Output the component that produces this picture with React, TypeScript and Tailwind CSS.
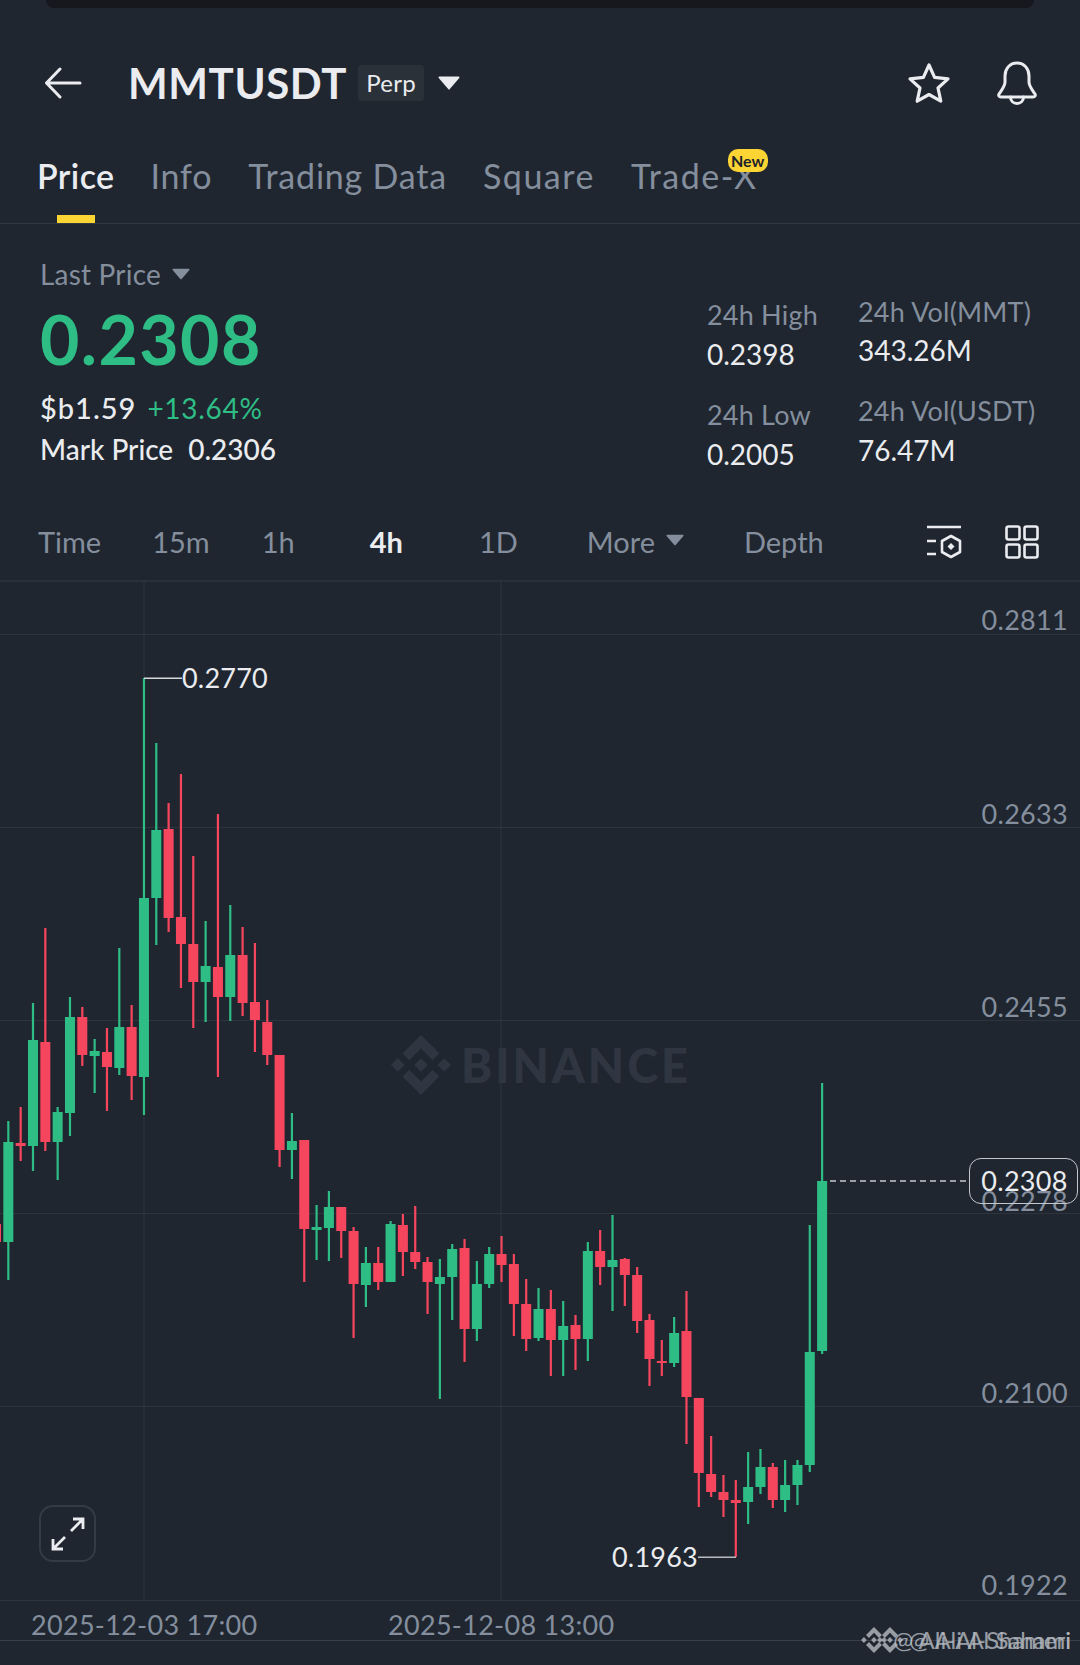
import { SiBinance } from "react-icons/si";

// [colour, wick top, body top, body bottom, wick bottom] in page y coordinates
type Candle = ["g" | "r", number, number, number, number];

const CANDLES: Candle[] = [
  ["r", 1224, 1224, 1242, 1242],
  ["g", 1121, 1142, 1242, 1280],
  ["r", 1107, 1143, 1146, 1161],
  ["g", 1003, 1040, 1146, 1171],
  ["r", 928, 1042, 1142, 1151],
  ["g", 1107, 1112, 1142, 1180],
  ["g", 997, 1017, 1113, 1136],
  ["r", 1007, 1017, 1055, 1066],
  ["g", 1039, 1051, 1056, 1093],
  ["r", 1028, 1052, 1067, 1111],
  ["g", 948, 1027, 1068, 1075],
  ["r", 1005, 1027, 1076, 1100],
  ["g", 678, 898, 1077, 1115],
  ["g", 743, 830, 898, 945],
  ["r", 803, 829, 918, 932],
  ["r", 774, 917, 944, 988],
  ["r", 856, 944, 982, 1028],
  ["g", 921, 966, 982, 1022],
  ["r", 814, 967, 997, 1077],
  ["g", 905, 955, 997, 1021],
  ["r", 927, 955, 1003, 1016],
  ["r", 943, 1002, 1020, 1052],
  ["r", 1000, 1022, 1055, 1065],
  ["r", 1055, 1055, 1150, 1167],
  ["g", 1113, 1141, 1150, 1179],
  ["r", 1140, 1140, 1229, 1282],
  ["g", 1205, 1227, 1230, 1260],
  ["g", 1191, 1207, 1228, 1261],
  ["r", 1207, 1207, 1231, 1258],
  ["r", 1227, 1231, 1284, 1338],
  ["g", 1247, 1263, 1285, 1307],
  ["r", 1247, 1263, 1282, 1290],
  ["g", 1221, 1224, 1282, 1282],
  ["r", 1214, 1225, 1252, 1276],
  ["r", 1206, 1252, 1262, 1269],
  ["r", 1257, 1262, 1282, 1314],
  ["g", 1259, 1277, 1284, 1399],
  ["g", 1244, 1249, 1277, 1320],
  ["r", 1239, 1248, 1329, 1362],
  ["g", 1261, 1284, 1329, 1341],
  ["g", 1247, 1254, 1284, 1288],
  ["r", 1236, 1254, 1265, 1282],
  ["r", 1254, 1264, 1304, 1336],
  ["r", 1279, 1304, 1339, 1351],
  ["g", 1288, 1309, 1338, 1341],
  ["r", 1290, 1309, 1340, 1376],
  ["g", 1301, 1326, 1340, 1376],
  ["r", 1315, 1325, 1339, 1370],
  ["g", 1242, 1251, 1339, 1361],
  ["r", 1230, 1251, 1267, 1285],
  ["g", 1215, 1260, 1267, 1311],
  ["r", 1258, 1259, 1275, 1306],
  ["r", 1267, 1275, 1321, 1333],
  ["r", 1314, 1320, 1359, 1386],
  ["r", 1340, 1361, 1363, 1376],
  ["g", 1317, 1333, 1363, 1367],
  ["r", 1291, 1331, 1397, 1444],
  ["r", 1398, 1398, 1473, 1507],
  ["r", 1436, 1474, 1492, 1497],
  ["r", 1475, 1492, 1500, 1517],
  ["r", 1480, 1500, 1503, 1557],
  ["g", 1452, 1487, 1502, 1524],
  ["g", 1449, 1467, 1487, 1494],
  ["r", 1463, 1467, 1500, 1508],
  ["g", 1460, 1485, 1500, 1512],
  ["g", 1460, 1465, 1485, 1505],
  ["g", 1225, 1352, 1465, 1472],
  ["g", 1083, 1181, 1351, 1354],
];

const GRID_Y = [634, 827, 1020, 1213, 1406, 1600];
const GRID_X = [144, 501];

function Caret({ className }: { className: string }) {
  return (
    <svg viewBox="0 0 22 14" className={className} fill="currentColor">
      <path d="M1.5 0.5h19a1 1 0 0 1 .8 1.6l-9.5 11a1 1 0 0 1-1.6 0l-9.5-11a1 1 0 0 1 .8-1.6z" />
    </svg>
  );
}

function Stat({ label, value, gap }: { label: string; value: string; gap: string }) {
  return (
    <div className={`flex flex-col ${gap}`}>
      <div className="text-[27px] leading-[32px] tracking-[0.2px] text-[#848e9c]">{label}</div>
      <div className="text-[28px] leading-[32px] text-[#eaecef]">{value}</div>
    </div>
  );
}

function Chart() {
  return (
    <svg viewBox="0 582 1080 1083" className="absolute inset-0 h-full w-full">
      {GRID_Y.map((y) => (
        <rect key={y} x={0} y={y} width={1080} height={1} fill="#2d343e" />
      ))}
      {GRID_X.map((x) => (
        <rect key={x} x={x - 0.5} y={582} width={1} height={1018} fill="#2d343e" />
      ))}
      <rect x={0} y={1640} width={1080} height={1} fill="#39404b" />
      {CANDLES.map(([c, wt, bt, bb, wb], i) => {
        const x = -4 + 12.33 * i;
        const fill = c === "g" ? "#2ebd85" : "#f6465d";
        return (
          <g key={i} fill={fill}>
            <rect x={x - 1.1} y={wt} width={2.2} height={wb - wt} />
            <rect x={x - 5} y={bt} width={10} height={bb - bt} />
          </g>
        );
      })}
      <rect x={144} y={677.5} width={38} height={1.5} fill="#d5d8dc" />
      <rect x={698} y={1556.5} width={38} height={1.5} fill="#b7bbc1" />
      <line x1={830} x2={969} y1={1181} y2={1181} stroke="#c4c8cd" strokeWidth={1.5} strokeDasharray="6 4" />
    </svg>
  );
}

export default function App() {
  return (
    <div className="relative flex h-[1665px] w-[1080px] flex-col overflow-hidden bg-[#1f2630] font-['Lato',sans-serif] text-[#eaecef]">
      <div className="mx-[46px] h-2 rounded-b-[22px] bg-[#17181d]" />

      {/* header */}
      <div className="flex h-[150px] items-center pl-[44px] pr-[41px]">
        <svg viewBox="0 0 38 32" className="h-[32px] w-[38px] text-[#eaecef]" fill="none" stroke="currentColor" strokeWidth={3} strokeLinecap="round" strokeLinejoin="round">
          <path d="M36 16H3M16 2 2.5 16 16 30" />
        </svg>
        <div className="ml-[46px] text-[42px] font-bold leading-none tracking-[0.6px] text-[#eaecef]">MMTUSDT</div>
        <div className="ml-[11px] flex h-[36px] w-[66px] items-center justify-center rounded-[4px] bg-[#2b3139] text-[24px] tracking-[0.3px] text-[#eaecef]">Perp</div>
        <Caret className="ml-[14px] h-[14px] w-[22px] text-[#eaecef]" />
        <svg viewBox="0 0 44 42" className="ml-auto h-[42px] w-[44px]" fill="none" stroke="#eaecef" strokeWidth={3.2} strokeLinejoin="round">
          <path d="M22 3l5.6 12.4 13.4 1.5-10 9.1 2.8 13.2L22 32.5 10.2 39.2 13 26 3 16.9l13.4-1.5z" />
        </svg>
        <svg viewBox="0 0 44 46" className="ml-[44px] h-[46px] w-[44px]" fill="none" stroke="#eaecef" strokeWidth={3} strokeLinejoin="round" strokeLinecap="round">
          <path d="M22 3c-7.500 0-12 6-12 13v6c0 4-2 6-6 12-.8 1.300 0 3 2 3h32c2 0 2.800-1.700 2-3-4-6-6-8-6-12v-6c0-7-4.500-13-12-13z" />
          <path d="M15.500 37c0 4 3 6.500 6.500 6.500s6.500-2.500 6.500-6.500" />
        </svg>
      </div>

      {/* tabs */}
      <div className="flex h-[66px] items-start gap-[36px] border-b border-[#323942] pl-[37px] text-[34px] leading-[36px] tracking-[0.8px] text-[#848e9c]">
        <div className="relative h-full font-semibold tracking-[0.4px] text-[#eaecef]">
          Price
          <div className="absolute bottom-0 left-[20px] h-2 w-[38px] bg-[#fcd535]" />
        </div>
        <div>Info</div>
        <div>Trading Data</div>
        <div className="tracking-[1.5px]">Square</div>
        <div className="relative tracking-[1.5px]">
          Trade-X
          <div className="absolute right-[-10px] top-[-9px] flex h-[23px] w-[40px] items-center justify-center rounded-[10px] bg-[#fcd535] text-[16px] font-bold leading-none tracking-normal text-[#1e2329]">New</div>
        </div>
      </div>

      {/* price summary */}
      <div className="flex h-[284px]">
        <div className="flex w-[707px] flex-col pl-[40px] pt-[34px]">
          <div className="flex items-center gap-[11px] text-[28px] leading-[32px] tracking-[0.2px] text-[#848e9c]">
            Last Price
            <Caret className="h-[12px] w-[18px]" />
          </div>
          <div className="mt-[12px] text-[68px] font-bold leading-[74px] tracking-[1.4px] text-[#2ebd85]">0.2308</div>
          <div className="mt-[15px] flex items-baseline gap-[11px] leading-[34px]">
            <span className="text-[29px] font-medium tracking-[1px] text-[#eaecef]">$b1.59</span>
            <span className="text-[28px] tracking-[0.7px] text-[#2ebd85]">+13.64%</span>
          </div>
          <div className="mt-[7px] flex gap-[15px] text-[28px] font-medium leading-[34px] text-[#eaecef]">
            <span>Mark Price</span>
            <span>0.2306</span>
          </div>
        </div>
        <div className="flex w-[151px] flex-col gap-[29px] pt-[75px]">
          <Stat label="24h High" value="0.2398" gap="gap-[7px]" />
          <Stat label="24h Low" value="0.2005" gap="gap-[7px]" />
        </div>
        <div className="flex flex-col gap-[29px] pt-[72px]">
          <Stat label="24h Vol(MMT)" value="343.26M" gap="gap-[6px]" />
          <Stat label="24h Vol(USDT)" value="76.47M" gap="gap-[7px]" />
        </div>
      </div>

      {/* interval bar */}
      <div className="relative flex h-[74px] items-start border-b-2 border-[#2a303a] pt-[17px] text-[29px] leading-[34px] text-[#848e9c]">
        <span className="ml-[38px]">Time</span>
        <span className="ml-[51px]">15m</span>
        <span className="ml-[52px]">1h</span>
        <span className="ml-[75px] font-bold text-[#eaecef]">4h</span>
        <span className="ml-[76px]">1D</span>
        <span className="ml-[69px]">More</span>
        <Caret className="ml-[11px] mt-[9px] h-[12px] w-[18px]" />
        <span className="ml-[60px]">Depth</span>
        <svg viewBox="0 0 36 34" className="ml-auto h-[34px] w-[36px]" fill="none" stroke="#eaecef" strokeWidth={2.600}>
          <path d="M1 2h34M1 16h9M1 29h9" />
          <path d="M25 11l9 5v11l-9 5-9-5V16z" strokeLinejoin="round" />
          <path d="M25 18l3.500 3.500-3.500 3.500-3.500-3.500z" fill="#eaecef" stroke="none" />
        </svg>
        <svg viewBox="0 0 34 34" className="ml-[43px] mr-[41px] h-[34px] w-[34px]" fill="none" stroke="#eaecef" strokeWidth={2.600}>
          <rect x="1.500" y="1.500" width="13" height="13" rx="2" />
          <rect x="19.500" y="1.500" width="13" height="13" rx="2" />
          <rect x="1.500" y="19.500" width="13" height="13" rx="2" />
          <rect x="19.500" y="19.500" width="13" height="13" rx="2" />
        </svg>
      </div>

      {/* chart canvas: everything below is placed on the price / time axes */}
      <div className="relative flex-1">
        <div className="absolute left-[391px] top-[453px] flex items-center gap-[10px] text-[#2f3641]">
          <SiBinance className="h-[60px] w-[60px]" />
          <span className="text-[47px] font-black leading-none tracking-[3px]">BINANCE</span>
        </div>
        <Chart />

        <div className="absolute right-[12px] top-[22px] text-[27px] leading-[32px] tracking-[0.3px] text-[#848e9c]">0.2811</div>
        <div className="absolute right-[12px] top-[216px] text-[27px] leading-[32px] tracking-[0.3px] text-[#848e9c]">0.2633</div>
        <div className="absolute right-[12px] top-[409px] text-[27px] leading-[32px] tracking-[0.3px] text-[#848e9c]">0.2455</div>
        <div className="absolute right-[12px] top-[603px] text-[27px] leading-[32px] tracking-[0.3px] text-[#848e9c]">0.2278</div>
        <div className="absolute right-[12px] top-[795px] text-[27px] leading-[32px] tracking-[0.3px] text-[#848e9c]">0.2100</div>
        <div className="absolute right-[12px] top-[987px] text-[27px] leading-[32px] tracking-[0.3px] text-[#848e9c]">0.1922</div>

        <div className="absolute left-[182px] top-[80px] text-[27px] leading-[32px] tracking-[0.2px] text-[#eaecef]">0.2770</div>
        <div className="absolute left-[612px] top-[959px] text-[27px] leading-[32px] tracking-[0.2px] text-[#eaecef]">0.1963</div>

        <div className="absolute left-[969px] top-[576px] flex h-[46px] w-[109px] items-center justify-center rounded-[12px] border-[1.5px] border-[#c4c8cd] pl-[2px] text-[27px] tracking-[0.3px] text-[#eaecef]">0.2308</div>

        <div className="absolute left-[39px] top-[923px] flex h-[57px] w-[57px] items-center justify-center rounded-[14px] border-2 border-[#343b46]">
          <svg viewBox="0 0 36 36" className="h-[36px] w-[36px]" fill="none" stroke="#eaecef" strokeWidth={2.800}>
            <path d="M21 15 33 3M23 3h10v10M15 21 3 33M13 33H3V23" />
          </svg>
        </div>

        <div className="absolute left-[31px] top-[1027px] text-[27px] leading-[32px] tracking-[0.3px] text-[#848e9c]">2025-12-03 17:00</div>
        <div className="absolute left-[388px] top-[1027px] text-[27px] leading-[32px] tracking-[0.3px] text-[#848e9c]">2025-12-08 13:00</div>

        <div className="absolute right-[9px] top-[1044px] flex items-center gap-[6px] text-[24px] leading-[28px] text-[#b7bbc1] opacity-80">
          <SiBinance className="h-[26px] w-[26px]" />
          <span>@ Ali-Al-Shameri</span>
        </div>
        <div className="absolute right-[9px] top-[1044px] flex items-center gap-[6px] text-[24px] leading-[28px] text-[#b7bbc1] opacity-80">
          <SiBinance className="h-[26px] w-[26px]" />
          <span>@ Ali Al Sahami</span>
        </div>
      </div>
    </div>
  );
}
